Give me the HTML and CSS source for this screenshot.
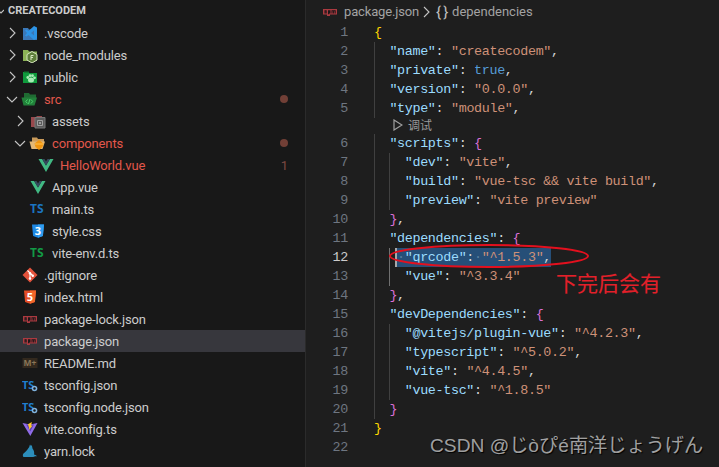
FILE: index.html
```html
<!DOCTYPE html>
<html lang="en">
<head>
<meta charset="utf-8">
<title>package.json</title>
<link rel="stylesheet" href="styles.css">
</head>
<body>
<svg class="defs" width="0" height="0" aria-hidden="true">
  <symbol id="open" viewBox="0 0 16 16"><path d="M3 6l5 5 5-5" fill="none" stroke="#c5c5c5" stroke-width="1.1"/></symbol>
  <symbol id="closed" viewBox="0 0 16 16"><path d="M6 3l5 5-5 5" fill="none" stroke="#c5c5c5" stroke-width="1.1"/></symbol>
  <symbol id="vue" viewBox="0 0 16 16"><path d="M0.5 2h3.6L8 8.6 11.9 2h3.6L8 15z" fill="#41b883"/><path d="M4.1 2h2.4L8 4.6 9.5 2h2.4L8 8.6z" fill="#35495e"/></symbol>
  <symbol id="npm" viewBox="0 0 16 16"><path d="M1 5h14v5.5H8V12H5v-1.500H1z" fill="#ab3a40"/><path d="M2.500 6.200h2.200v3.300h-1v-2.300h-.2v2.300h-1zM6 6.200h2.500v3.300H7.200v.8H6zM7 7.200h.5v1.300H7zM9.500 6.200h4.200v3.300h-1v-2.300h-.6v2.300h-1v-2.300h-.6v2.300h-1z" fill="#1d1719"/></symbol>
</svg>

<div class="app">
  <aside class="sidebar">
    <div class="head"><svg class="head-chev" viewBox="0 0 4 6" width="4" height="6"><path d="M-3 1l4 4 3-3" fill="none" stroke="#c5c5c5" stroke-width="1.100"/></svg>CREATECODEM</div>

    <div class="row"><svg class="tw" width="16" height="16"><use href="#closed"/></svg><svg class="ic" viewBox="0 0 16 16"><path d="M1 3h5l1 1.500h8V15H1z" fill="#3b78b8"/><path d="M12 1l3 1.500v11L12 15 6.500 10 4.500 11.500 3 10.500 5 8 3 5.500 4.500 4.500 6.500 6zM12 5.500L9 8l3 2.500z" fill="#2d94e6"/></svg><span class="nm">.vscode</span></div>
    <div class="row"><svg class="tw" width="16" height="16"><use href="#closed"/></svg><svg class="ic" viewBox="0 0 16 16"><path d="M1 3h5l1 1.500h8V14H1z" fill="#8cb356"/><path d="M10 4.500l5 3v5.500l-5 3-5-3V7.500z" fill="#5f7f3c" stroke="#d4e4bd" stroke-width="1"/><path d="M9 8.500h2.500M9 8.500V13M11 10.500h-2" stroke="#d8e8c4" fill="none"/></svg><span class="nm">node_modules</span></div>
    <div class="row"><svg class="tw" width="16" height="16"><use href="#closed"/></svg><svg class="ic" viewBox="0 0 16 16"><path d="M1 3h5l1 1h8v10H1z" fill="#0f9a3c"/><path d="M2 2.500h5V4H2z" fill="#0f7a30"/><ellipse cx="9" cy="11" rx="3" ry="2.500" fill="#a6eab4"/><circle cx="5.800" cy="8.500" r="1.400" fill="#a6eab4"/><circle cx="8" cy="6.700" r="1.400" fill="#a6eab4"/><circle cx="10.500" cy="6.700" r="1.400" fill="#a6eab4"/><circle cx="12.500" cy="8.800" r="1.400" fill="#a6eab4"/></svg><span class="nm">public</span></div>
    <div class="row"><svg class="tw" width="16" height="16"><use href="#open"/></svg><svg class="ic ic-wide" viewBox="0 0 16 16"><path d="M3 2h5l1 1.500h6V8H3z" fill="#1f6b32"/><path d="M0.500 6.500H16L13.500 14.500H2.500z" fill="#22803a"/><path d="M6.500 8.500L4.800 10.500 6.500 12.500M10 8.500l1.700 2-1.700 2M9 8l-1.500 5" fill="none" stroke="#4bd36c" stroke-width="1"/></svg><span class="nm mod">src</span><span class="dot"></span></div>
    <div class="row d1"><svg class="tw" width="16" height="16"><use href="#closed"/></svg><svg class="ic" viewBox="0 0 16 16"><path d="M1 4h5l1-1h5v3h3v8H1z" fill="#98484c"/><path d="M5 4.500h10V15H5z" fill="#5b5b5b"/><path d="M5 4.500h10V15H5z" fill="none" stroke="#777"/><path d="M7.500 7.500h5v5h-5z" fill="none" stroke="#a0a0a0"/><circle cx="10" cy="10" r="1" fill="#b0b0b0"/></svg><span class="nm">assets</span></div>
    <div class="row d1"><svg class="tw" width="16" height="16"><use href="#open"/></svg><svg class="ic ic-wide" viewBox="0 0 16 16"><path d="M3 2.500h5L9 4h6v4H3z" fill="#c99a5a"/><path d="M0.500 6.500H16L13.500 14H2.500z" fill="#e3b877"/><path d="M10 5l4.500 3.500-1 3.500L10 15l-3.500-3-1-3.500z" fill="#f0950f"/><path d="M6 9h8" stroke="#ffc14d"/></svg><span class="nm mod">components</span><span class="dot"></span></div>
    <div class="row d2"><span class="tw"></span><svg class="ic"><use href="#vue"/></svg><span class="nm err">HelloWorld.vue</span><span class="count">1</span></div>
    <div class="row d1"><span class="tw"></span><svg class="ic"><use href="#vue"/></svg><span class="nm">App.vue</span></div>
    <div class="row d1"><span class="tw"></span><span class="ic ts">TS</span><span class="nm">main.ts</span></div>
    <div class="row d1"><span class="tw"></span><svg class="ic" viewBox="0 0 16 16"><path d="M2 1.500h12l-1.100 11.500L8 14.800 3.100 13z" fill="#1e88e5"/><path d="M8 1.500h6l-1.100 11.500L8 14.800z" fill="#2f9df0"/><text x="8" y="11.800" class="glyph-num">3</text></svg><span class="nm">style.css</span></div>
    <div class="row d1"><span class="tw"></span><span class="ic ts ts-green">TS</span><span class="nm">vite-env.d.ts</span></div>
    <div class="row"><span class="tw"></span><svg class="ic" viewBox="0 0 16 16"><path d="M8 0.500L15.500 8 8 15.500 0.500 8z" fill="#e4533c"/><path d="M5.500 3.500l5 5M8 6v6.500" stroke="#fff" stroke-width="1.100" fill="none"/><circle cx="8" cy="6.200" r="1.200" fill="#fff"/><circle cx="8" cy="11.500" r="1.200" fill="#fff"/><circle cx="10.800" cy="8.800" r="1.200" fill="#fff"/></svg><span class="nm">.gitignore</span></div>
    <div class="row"><span class="tw"></span><svg class="ic" viewBox="0 0 16 16"><path d="M2 1.500h12l-1.100 11.500L8 14.800 3.100 13z" fill="#e44d26"/><path d="M8 1.500h6l-1.100 11.500L8 14.800z" fill="#f1652a"/><text x="8" y="11.800" class="glyph-num">5</text></svg><span class="nm">index.html</span></div>
    <div class="row"><span class="tw"></span><svg class="ic"><use href="#npm"/></svg><span class="nm">package-lock.json</span></div>
    <div class="row sel-row"><span class="tw"></span><svg class="ic"><use href="#npm"/></svg><span class="nm">package.json</span></div>
    <div class="row"><span class="tw"></span><svg class="ic" viewBox="0 0 16 16"><path d="M0.500 3h15v10h-15z" fill="#33291e"/><text x="8" y="11" class="glyph-md">M+</text></svg><span class="nm">README.md</span></div>
    <div class="row"><span class="tw"></span><svg class="ic" viewBox="0 0 16 16"><text x="0" y="11.500" class="glyph-ts">TS</text><circle cx="12.500" cy="11.500" r="2.800" fill="#7fb2dc"/><circle cx="12.500" cy="11.500" r="1.200" fill="#181818"/></svg><span class="nm">tsconfig.json</span></div>
    <div class="row"><span class="tw"></span><svg class="ic" viewBox="0 0 16 16"><text x="0" y="11.500" class="glyph-ts">TS</text><circle cx="12.500" cy="11.500" r="2.800" fill="#7fb2dc"/><circle cx="12.500" cy="11.500" r="1.200" fill="#181818"/></svg><span class="nm">tsconfig.node.json</span></div>
    <div class="row"><span class="tw"></span><svg class="ic" viewBox="0 0 16 16"><path d="M0.500 2L8 3.500 15.500 2 8.300 15z" fill="#8f6be8"/><path d="M4 3.200L8 4 12 3.200 8.300 10.500z" fill="#5b3fb0"/><path d="M9.800 1L6 3.300l1.200 3.900-.6 2.300 4-5-1.400.2z" fill="#ffc928"/></svg><span class="nm">vite.config.ts</span></div>
    <div class="row"><span class="tw"></span><svg class="ic" viewBox="0 0 16 16"><path d="M8 1.500l1 1.500.8-1 .7 3.500c1.500 2 2 4 1.500 6 1 .3 2 .5 3 1.800-1.800-.3-2.500.3-3.800.7H1.500c-1-1-.8-2.500 0-3.500 1.500-1 3.500-3 5-5.500C7.200 4.500 7.500 3 8 1.500z" fill="#2c8ebb"/></svg><span class="nm">yarn.lock</span></div>
  </aside>

  <main class="editor">
    <div class="crumbs"><svg class="ic"><use href="#npm"/></svg><span class="c-file">package.json</span><svg class="c-sep" width="16" height="16"><use href="#closed"/></svg><span class="c-obj">{}</span><span class="c-dep">dependencies</span></div>

    <div class="code">
      <div class="ln"><span class="no">1</span><span class="tx"><b class="yel">{</b></span></div>
      <div class="ln"><span class="no">2</span><span class="tx"><i class="ind"></i><span class="k">"name"</span>: <span class="s">"createcodem"</span>,</span></div>
      <div class="ln"><span class="no">3</span><span class="tx"><i class="ind"></i><span class="k">"private"</span>: <span class="b">true</span>,</span></div>
      <div class="ln"><span class="no">4</span><span class="tx"><i class="ind"></i><span class="k">"version"</span>: <span class="s">"0.0.0"</span>,</span></div>
      <div class="ln"><span class="no">5</span><span class="tx"><i class="ind"></i><span class="k">"type"</span>: <span class="s">"module"</span>,</span></div>
      <div class="lens"><svg class="play" width="10" height="12" viewBox="0 0 10 12"><path d="M1 1l8 5-8 5z" fill="none" stroke="#a0a0a0" stroke-width="1.200"/></svg><span>调试</span></div>
      <div class="ln"><span class="no">6</span><span class="tx"><i class="ind"></i><span class="k">"scripts"</span>: <b class="pnk">{</b></span></div>
      <div class="ln"><span class="no">7</span><span class="tx"><i class="ind"></i><i class="ind"></i><span class="k">"dev"</span>: <span class="s">"vite"</span>,</span></div>
      <div class="ln"><span class="no">8</span><span class="tx"><i class="ind"></i><i class="ind"></i><span class="k">"build"</span>: <span class="s">"vue-tsc &amp;&amp; vite build"</span>,</span></div>
      <div class="ln"><span class="no">9</span><span class="tx"><i class="ind"></i><i class="ind"></i><span class="k">"preview"</span>: <span class="s">"vite preview"</span></span></div>
      <div class="ln"><span class="no">10</span><span class="tx"><i class="ind"></i><b class="pnk">}</b>,</span></div>
      <div class="ln"><span class="no">11</span><span class="tx"><i class="ind"></i><span class="k">"dependencies"</span>: <b class="pnk">{</b></span></div>
      <div class="ln"><span class="no act">12</span><span class="tx"><i class="ind"></i><i class="ind ind-act ind-one"></i><span class="sel"><span class="ws">·</span><span class="k">"qrcode"</span>:<span class="ws">·</span><span class="s">"^1.5.3"</span>,</span></span></div>
      <div class="ln"><span class="no">13</span><span class="tx"><i class="ind"></i><i class="ind ind-act"></i><span class="k">"vue"</span>: <span class="s">"^3.3.4"</span></span></div>
      <div class="ln"><span class="no">14</span><span class="tx"><i class="ind"></i><b class="pnk">}</b>,</span></div>
      <div class="ln"><span class="no">15</span><span class="tx"><i class="ind"></i><span class="k">"devDependencies"</span>: <b class="pnk">{</b></span></div>
      <div class="ln"><span class="no">16</span><span class="tx"><i class="ind"></i><i class="ind"></i><span class="k">"@vitejs/plugin-vue"</span>: <span class="s">"^4.2.3"</span>,</span></div>
      <div class="ln"><span class="no">17</span><span class="tx"><i class="ind"></i><i class="ind"></i><span class="k">"typescript"</span>: <span class="s">"^5.0.2"</span>,</span></div>
      <div class="ln"><span class="no">18</span><span class="tx"><i class="ind"></i><i class="ind"></i><span class="k">"vite"</span>: <span class="s">"^4.4.5"</span>,</span></div>
      <div class="ln"><span class="no">19</span><span class="tx"><i class="ind"></i><i class="ind"></i><span class="k">"vue-tsc"</span>: <span class="s">"^1.8.5"</span></span></div>
      <div class="ln"><span class="no">20</span><span class="tx"><i class="ind"></i><b class="pnk">}</b></span></div>
      <div class="ln"><span class="no">21</span><span class="tx"><b class="yel">}</b></span></div>
      <div class="ln"><span class="no">22</span><span class="tx"></span></div>
    </div>
  </main>
</div>

<svg class="circle" width="204" height="30" viewBox="0 0 204 30"><ellipse cx="102" cy="15" rx="99" ry="11" fill="none" stroke="#e3101e" stroke-width="2"/></svg>
<div class="note">下完后会有</div>
<div class="mark">CSDN @じòぴé南洋じょうげん</div>
</body>
</html>
```

FILE: styles.css
```css
* { box-sizing: border-box; }
html, body { margin: 0; height: 100%; overflow: hidden; background: #1e1e1e; }
body { position: relative; width: 719px; height: 467px; }
.defs { position: absolute; }
.app { display: flex; width: 719px; height: 467px; }

.sidebar {
  width: 306px; flex: none; background: #181818; border-right: 1px solid #2b2b2b;
  font: 13px/22px "Roboto", "Noto Sans", sans-serif; color: #cccccc;
}
.head {
  height: 22px; padding-left: 8px; font-size: 11px; font-weight: 700; color: #cccccc;
  display: flex; align-items: center; position: relative;
}
.head-chev { position: absolute; left: 0; top: 8px; }
.row { display: flex; align-items: center; height: 22px; padding: 0 14px 0 4px; }
.row.d1 { padding-left: 12px; }
.row.d2 { padding-left: 20px; }
.sel-row { background: #37373d; }
.tw { width: 16px; height: 16px; flex: none; margin-right: 2px; }
.ic { width: 16px; height: 16px; flex: none; margin-right: 6px; display: block; }
.ic-wide { margin-left: -1px; margin-right: 7px; }
.nm { flex: 1; white-space: nowrap; letter-spacing: -0.150px; padding-top: 2px; }
.mod { color: #e2574b; }
.err { color: #e2574b; }
.dot { width: 8px; height: 8px; border-radius: 50%; background: #713f36; margin-right: 3px; flex: none; }
.count { color: #7c4a42; margin-right: 3px; padding-top: 2px; }
.ts {
  font: 700 12px/16px "Open Sans", sans-serif; color: #1b74c0;
  text-align: left;
}
.ts-green { color: #129a45; }
.glyph-ts { font: 700 11px "Open Sans", sans-serif; fill: #1f7fd0; }
.glyph-num { font: 700 11px "Open Sans", sans-serif; fill: #ffffff; text-anchor: middle; }
.glyph-md { font: 700 8.500px "Open Sans", sans-serif; fill: #8a7658; text-anchor: middle; }

.editor { flex: 1; min-width: 0; background: #1e1e1e; }
.crumbs {
  height: 22px; display: flex; align-items: center; padding: 1px 0 0 16px;
  font: 13px/22px "Roboto", "Noto Sans", sans-serif; color: #a3a3a3;
}
.crumbs .ic { margin-right: 6px; }
.c-file { letter-spacing: -0.150px; }
.c-sep { margin-left: -1px; flex: none; }
.c-obj { width: 17px; padding-left: 2px; margin-right: 1px; font-size: 15px; color: #c0c0c0; letter-spacing: 2px; white-space: nowrap; }

.code { font: 13.400px/19px "Liberation Mono", monospace; letter-spacing: -0.340px; color: #d4d4d4; padding-top: 1px; }
.ln { display: flex; height: 19px; }
.no { width: 42px; text-align: right; color: #6e7681; flex: none; margin-right: 26px; }
.no.act { color: #cccccc; }
.tx { white-space: pre; display: flex; height: 19px; flex: 1; }
.ind { display: block; flex: none; width: 15.400px; height: 19px; box-shadow: inset 1px 0 0 #404040; }
.ind-act { box-shadow: inset 1px 0 0 #707070; }
.ind-one { width: 7.700px; }
.k { color: #9cdcfe; }
.s { color: #ce9178; }
.b { color: #569cd6; }
b { font-weight: 400; }
.yel { color: #ffd700; }
.pnk { color: #da70d6; }
.sel { background: #264f78; height: 19px; box-shadow: -2px 0 0 #a8a8a8; display: block; }
.ws { color: #5a7f9f; }
.lens {
  height: 16px; display: flex; align-items: center; padding: 0 0 3px 87px; gap: 5px;
  font: 12px/16px "Noto Sans CJK SC", sans-serif; color: #999999; letter-spacing: 0;
}
.play { display: block; flex: none; }

.circle { position: absolute; left: 387px; top: 241px; }
.note {
  position: absolute; left: 556px; top: 267px; font: 21px/30px "Noto Sans CJK SC", sans-serif;
  color: #e3202a; white-space: nowrap; -webkit-text-stroke: 0.100px #e3202a;
}
.mark {
  position: absolute; left: 430px; top: 433px; font: 19.200px/26px "Liberation Sans", "Noto Sans CJK JP", sans-serif;
  color: rgba(225, 225, 225, 0.7); text-shadow: 1px 1px 1px #000; white-space: nowrap;
}
```
